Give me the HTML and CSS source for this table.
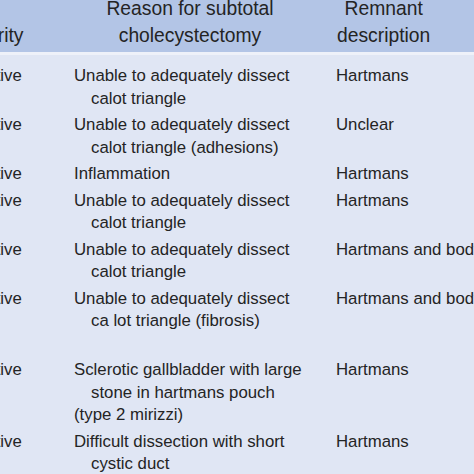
FILE: index.html
```html
<!DOCTYPE html>
<html>
<head>
<meta charset="utf-8">
<link rel="stylesheet" href="styles.css">
</head>
<body>
<div class="table">
  <div class="head">
    <div class="c1">Priority</div>
    <div class="c2"><div>Reason for subtotal</div><div>cholecystectomy</div></div>
    <div class="c3"><div class="hbox"><div>Remnant</div><div>description</div></div></div>
  </div>
  <div class="sep"></div>
  <div class="body">
    <div class="row">
      <div class="c1">Elective</div>
      <div class="c2"><div>Unable to adequately dissect</div><div class="cont">calot triangle</div></div>
      <div class="c3">Hartmans</div>
    </div>
    <div class="row">
      <div class="c1">Elective</div>
      <div class="c2"><div>Unable to adequately dissect</div><div class="cont">calot triangle (adhesions)</div></div>
      <div class="c3">Unclear</div>
    </div>
    <div class="row">
      <div class="c1">Elective</div>
      <div class="c2"><div>Inflammation</div></div>
      <div class="c3">Hartmans</div>
    </div>
    <div class="row">
      <div class="c1">Elective</div>
      <div class="c2"><div>Unable to adequately dissect</div><div class="cont">calot triangle</div></div>
      <div class="c3">Hartmans</div>
    </div>
    <div class="row">
      <div class="c1">Elective</div>
      <div class="c2"><div>Unable to adequately dissect</div><div class="cont">calot triangle</div></div>
      <div class="c3">Hartmans and body</div>
    </div>
    <div class="row tall">
      <div class="c1">Elective</div>
      <div class="c2"><div>Unable to adequately dissect</div><div class="cont">ca lot triangle (fibrosis)</div></div>
      <div class="c3">Hartmans and body</div>
    </div>
    <div class="row">
      <div class="c1">Elective</div>
      <div class="c2"><div>Sclerotic gallbladder with large</div><div class="cont">stone in hartmans pouch</div><div>(type 2 mirizzi)</div></div>
      <div class="c3">Hartmans</div>
    </div>
    <div class="row">
      <div class="c1">Elective</div>
      <div class="c2"><div>Difficult dissection with short</div><div class="cont">cystic duct</div></div>
      <div class="c3">Hartmans</div>
    </div>
  </div>
</div>
</body>
</html>
```
FILE: styles.css
```css
html, body {
  margin: 0;
  padding: 0;
  overflow: hidden;
  background: #e0e6f4;
}
body {
  width: 474px;
  height: 474px;
  font-family: "Liberation Sans", Arial, Helvetica, sans-serif;
  color: #242424;
}
.table {
  width: 560px;
  margin-left: -40px;
  margin-top: -6px;
}
.head, .row {
  display: grid;
  grid-template-columns: 102px 262px 196px;
  white-space: nowrap;
}
.head {
  background: #b3c5e6;
  font-size: 19.3px;
  line-height: 27.5px;
  padding-top: 0.5px;
  padding-bottom: 2.5px;
}
.head .c1 {
  display: flex;
  align-items: flex-end;
  padding-left: 3.5px;
}
.head .c2 {
  text-align: center;
  padding-right: 6px;
}
.head .c3 {
  padding-left: 13px;
}
.hbox {
  display: inline-block;
  text-align: center;
}
.sep {
  height: 3px;
  background: #eef1f9;
}
.body {
  background: #e0e6f4;
  padding-top: 8px;
  font-size: 16.8px;
  line-height: 22.5px;
}
.row {
  padding: 2px 0;
}
.row.tall {
  padding-bottom: 24.5px;
}
.row .c1 {
  padding-left: 3px;
}
.row .c2 {
  padding-left: 12px;
}
.row .c3 {
  padding-left: 12px;
}
.cont {
  padding-left: 17px;
}
```
